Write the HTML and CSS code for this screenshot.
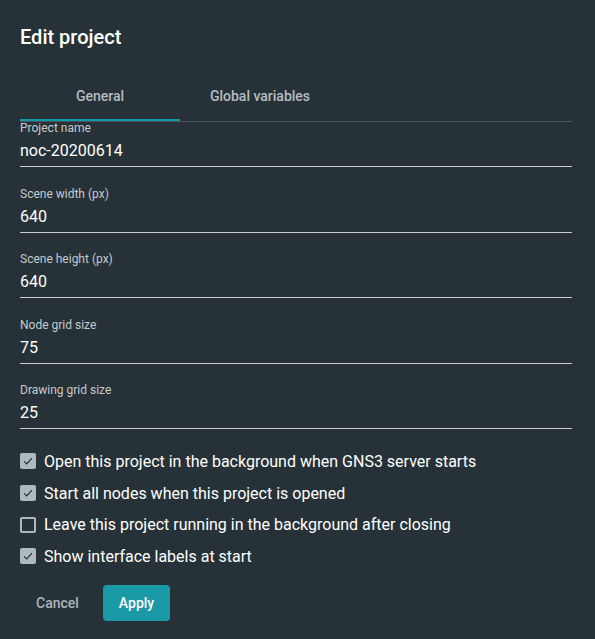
FILE: index.html
```html
<!DOCTYPE html>
<html lang="en">
<head>
    <meta charset="UTF-8">
    <meta name="viewport" content="width=device-width, initial-scale=1.0">
    <title>Edit project</title>
    <link rel="stylesheet" href="styles.css">
</head>
<body>
    <div class="dialog">
        <h1 class="title">Edit project</h1>

        <!-- Tabs -->
        <div class="tabs">
            <div class="tab active">General</div>
            <div class="tab">Global variables</div>
        </div>

        <!-- Campos -->
        <div class="field">
            <label>Project name</label>
            <div class="value">noc-20200614</div>
        </div>
        <div class="field">
            <label>Scene width (px)</label>
            <div class="value">640</div>
        </div>
        <div class="field">
            <label>Scene height (px)</label>
            <div class="value">640</div>
        </div>
        <div class="field">
            <label>Node grid size</label>
            <div class="value">75</div>
        </div>
        <div class="field">
            <label>Drawing grid size</label>
            <div class="value">25</div>
        </div>

        <!-- Opciones -->
        <div class="options">
            <div class="option"><span class="box checked"><svg viewBox="0 0 16 16"><path d="M4 8.3 L6.7 11 L12 5.2" /></svg></span>Open this project in the background when GNS3 server starts</div>
            <div class="option"><span class="box checked"><svg viewBox="0 0 16 16"><path d="M4 8.3 L6.7 11 L12 5.2" /></svg></span>Start all nodes when this project is opened</div>
            <div class="option"><span class="box"></span>Leave this project running in the background after closing</div>
            <div class="option"><span class="box checked"><svg viewBox="0 0 16 16"><path d="M4 8.3 L6.7 11 L12 5.2" /></svg></span>Show interface labels at start</div>
        </div>

        <div class="actions">
            <button class="btn cancel">Cancel</button>
            <button class="btn apply">Apply</button>
        </div>
    </div>
</body>
</html>
```

FILE: styles.css
```css
body {
    margin: 0;
    background-color: #263238;
    font-family: Roboto, "Noto Sans", Arial, sans-serif;
    color: #ffffff;
}
.dialog {
    padding: 21px 23px 0 20px;
}
.title {
    margin: 0;
    font-size: 20px;
    font-weight: 500;
    line-height: 32px;
}
.tabs {
    display: flex;
    margin-top: 19px;
    margin-bottom: -1px;
    border-bottom: 1px solid #4a555b;
}
.tab {
    width: 160px;
    height: 49px;
    line-height: 48px;
    text-align: center;
    font-size: 14px;
    font-weight: 500;
    color: #b6bcc0;
    box-sizing: border-box;
}
.tab.active {
    border-bottom: 2px solid #0e9aa7;
    margin-bottom: -1px;
}
.field {
    margin-bottom: 19.5px;
    border-bottom: 1px solid #c9cdd0;
    padding-bottom: 3px;
}
.field label {
    display: block;
    font-size: 12px;
    line-height: 14px;
    color: #c5cace;
}
.field .value {
    margin-top: 4px;
    font-size: 16px;
    line-height: 24px;
}
.options {
    margin-top: -3px;
}
.option {
    display: flex;
    align-items: center;
    height: 31.7px;
    font-size: 16px;
}
.box {
    width: 16px;
    height: 16px;
    margin-right: 8px;
    border: 2px solid #aeb9c0;
    border-radius: 2px;
    box-sizing: border-box;
}
.box.checked {
    background-color: #aeb9c0;
    border: none;
}
.box svg {
    width: 16px;
    height: 16px;
    display: block;
}
.box path {
    fill: none;
    stroke: #263238;
    stroke-width: 1.2;
}
.actions {
    display: flex;
    gap: 8px;
    margin-top: 13px;
}
.btn {
    height: 36px;
    padding: 0 16px;
    font-family: inherit;
    font-size: 14px;
    font-weight: 500;
    border: none;
    border-radius: 4px;
    cursor: pointer;
}
.cancel {
    background: none;
    color: #aab4ba;
}
.apply {
    background-color: #1a9aa6;
    color: #ffffff;
}
```
